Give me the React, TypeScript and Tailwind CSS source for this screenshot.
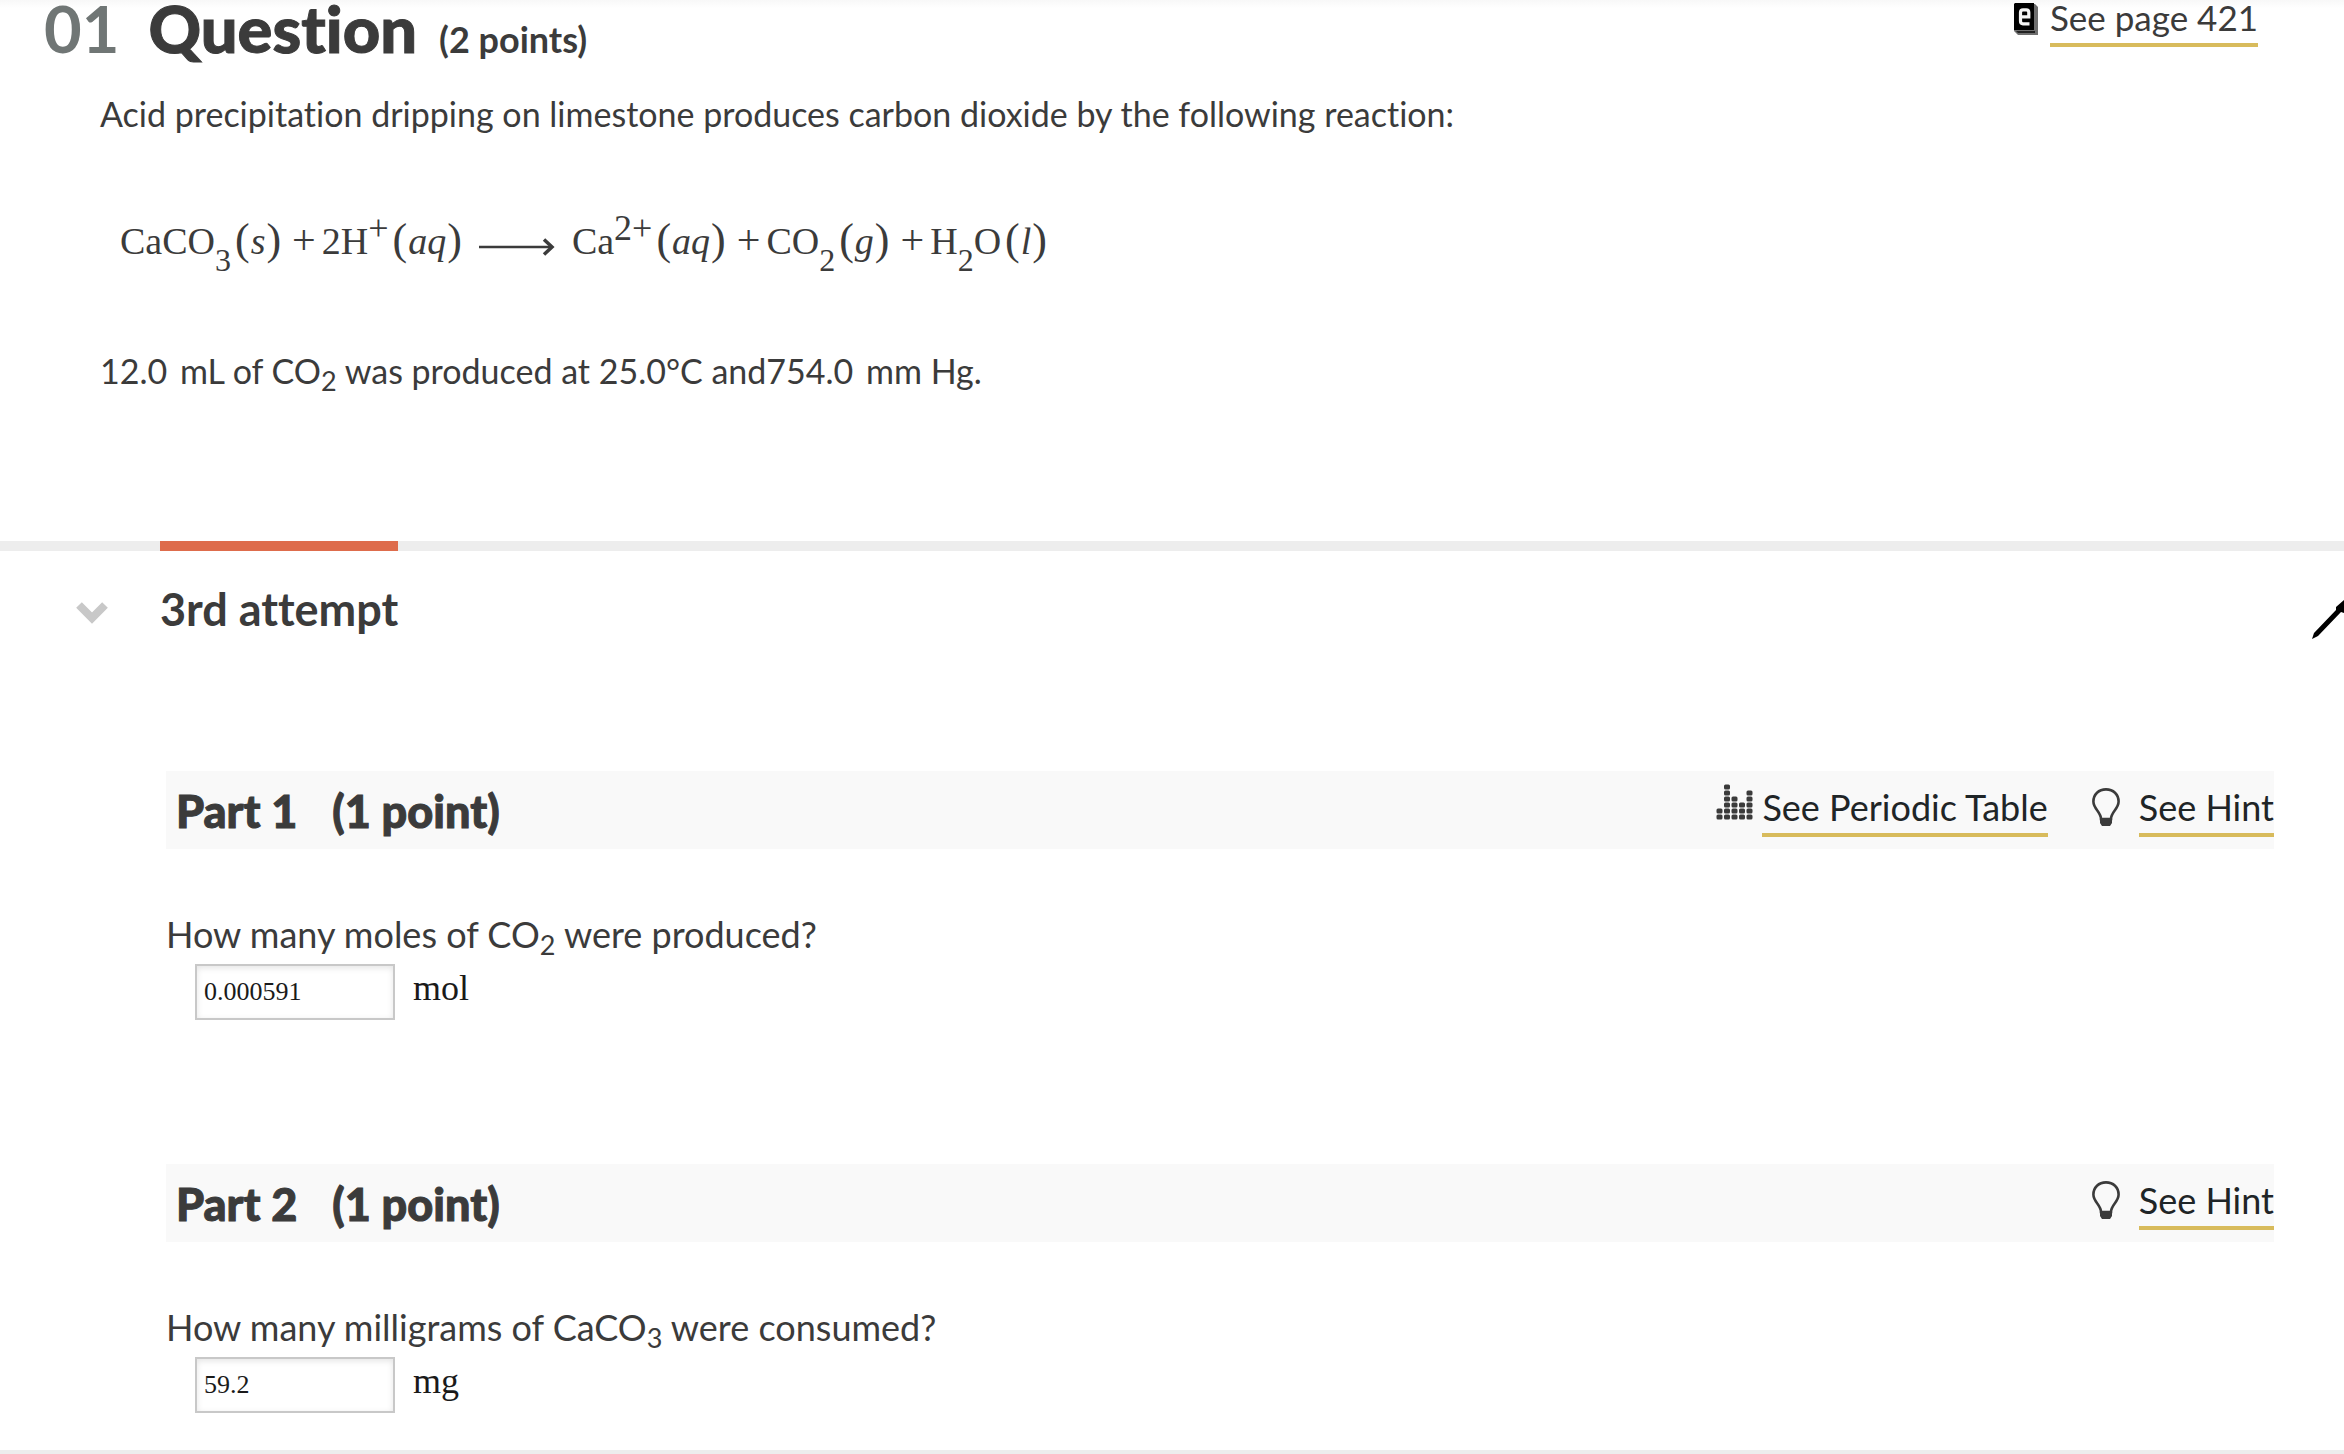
import type { ReactNode } from 'react';

const parts = [
  {
    id: 1,
    question: (
      <>
        How many moles of CO<Sub>2</Sub> were produced?
      </>
    ),
    answer: '0.000591',
    unit: 'mol',
    periodicTable: true,
  },
  {
    id: 2,
    question: (
      <>
        How many milligrams of CaCO<Sub>3</Sub> were consumed?
      </>
    ),
    answer: '59.2',
    unit: 'mg',
    periodicTable: false,
  },
];

function Sub({ children }: { children: ReactNode }) {
  return <span className="align-[-7px] text-[27px] leading-none">{children}</span>;
}

// Heights of the dotted columns in the periodic table icon
const columns = [2, 6, 4, 3, 5];

function PeriodicIcon() {
  return (
    <svg className="h-[36px] w-[38px]" viewBox="0 0 38 36" fill="#3b3b3b" aria-hidden="true">
      {columns.map((count, col) =>
        Array.from({ length: count }, (_, row) => (
          <rect key={`${col}-${row}`} x={col * 7.5 + 0.5} y={30.5 - row * 6} width="6" height="5" rx="1.5" />
        ))
      )}
    </svg>
  );
}

function BulbIcon() {
  return (
    <svg className="h-[38px] w-[28px]" viewBox="0 0 28 38" fill="none" aria-hidden="true">
      <path
        d="M9 31C9 24 1.4 21 1.4 13.6C1.4 6.2 6.8 1.4 14 1.4S26.6 6.2 26.6 13.6C26.6 21 19 24 19 31Z"
        stroke="#3b3b3b"
        strokeWidth="2.6"
      />
      <path d="M8 31h12v4l-2 3h-8l-2-3z" fill="#3b3b3b" />
    </svg>
  );
}

function BookIcon() {
  return (
    <svg className="h-[32px] w-[24px]" viewBox="0 0 24 32" aria-hidden="true">
      <path d="M3 1h18l3 3v28H4l-4-4z" fill="#6e6e6e" />
      <path d="M2 28h19v2H4z" fill="#222" />
      <path d="M1 0h19v27H0V1z" fill="#000" />
      <path
        d="M7 13.8H14.8V9.5Q14.8 6.8 12.3 6.8H9Q6.5 6.8 6.5 9.5V18Q6.5 20.8 9 20.8H15.5"
        fill="none"
        stroke="#f4f4f4"
        strokeWidth="3.2"
      />
    </svg>
  );
}

function RefLink({ children }: { children: ReactNode }) {
  return (
    <a href="#" className="border-b-4 border-[#d8bb5c] pb-[9px] leading-[34px]">
      {children}
    </a>
  );
}

function State({ children }: { children: ReactNode }) {
  return (
    <span className="ml-1">
      <span className="text-[44px] leading-none">(</span>
      <i className="mx-px">{children}</i>
      <span className="text-[44px] leading-none">)</span>
    </span>
  );
}

function Plus() {
  return <span className="mr-[6px] ml-[11px] text-[42px]">+</span>;
}

function Lower({ children }: { children: ReactNode }) {
  return <span className="align-[-17px] text-[32px] leading-none">{children}</span>;
}

function Upper({ children }: { children: ReactNode }) {
  return <span className="align-[14px] text-[36px] leading-none">{children}</span>;
}

function Equation() {
  return (
    <div className="flex items-baseline font-['Liberation_Serif',serif] text-[38px] leading-[60px]">
      <span>
        CaCO<Lower>3</Lower>
        <State>s</State>
      </span>
      <Plus />
      <span>
        2H<Upper>+</Upper>
        <State>aq</State>
      </span>
      <svg className="mx-[17px] h-[18px] w-[76px] translate-y-[2px]" viewBox="0 0 76 18" fill="none" stroke="#3b3b3b" aria-hidden="true">
        <path d="M0 9h73" strokeWidth="2.5" />
        <path d="M65 1.5L73 9L65 16.5" strokeWidth="3.5" />
      </svg>
      <span>
        Ca<Upper>2+</Upper>
        <State>aq</State>
      </span>
      <Plus />
      <span>
        CO<Lower>2</Lower>
        <State>g</State>
      </span>
      <Plus />
      <span>
        H<Lower>2</Lower>O<State>l</State>
      </span>
    </div>
  );
}

export default function App() {
  return (
    <main className="min-h-screen bg-white font-['Lato',sans-serif] text-[#3b3b3b] [font-variant-ligatures:none]">
      <header className="flex items-start justify-between bg-linear-to-b from-[#f8f8f8] to-white to-[8px] pr-[86px] pl-[44px]">
        <h1 className="flex items-baseline text-[65px] leading-[56px]">
          <span className="font-bold text-[#707675]">01</span>
          <span className="ml-[29px] font-black [-webkit-text-stroke:1px_#3b3b3b]">Question</span>
          <span className="ml-[22px] text-[36px] font-bold">(2 points)</span>
        </h1>
        <div className="flex items-start gap-[12px] text-[35px]">
          <div className="pt-[3px]">
            <BookIcon />
          </div>
          <RefLink>See page 421</RefLink>
        </div>
      </header>

      <section className="px-[100px] pt-[25px] text-[34px] leading-[44px]">
        <p>Acid precipitation dripping on limestone produces carbon dioxide by the following reaction:</p>
        <div className="mt-[74px] pl-[20px]">
          <Equation />
        </div>
        <p className="mt-[73px]">
          12.0 <span className="ml-[4px]">mL</span> of CO<Sub>2</Sub> was produced at 25.0°C and754.0{' '}
          <span className="ml-[4px]">mm</span> Hg.
        </p>
      </section>

      <section className="mt-[147px] border-t-[10px] border-[#ededed]">
        <div className="flex items-start">
          <button type="button" aria-label="Toggle attempt" className="mt-[51px] ml-[76px]">
            <svg className="h-[22px] w-[32px]" viewBox="0 0 32 22" fill="none" aria-hidden="true">
              <path d="M3 3L16 16L29 3" stroke="#c8c8c8" strokeWidth="8" />
            </svg>
          </button>
          <h2 className="-mt-[10px] ml-[52px] border-t-[10px] border-[#de6c4c] pt-[30px] text-[45px] leading-[56px] font-bold">
            3rd attempt
          </h2>
          <svg className="mt-[48px] ml-auto h-[42px] w-[34px]" viewBox="0 0 34 42" aria-hidden="true">
            <path d="M2 40L4 34L26 11V8L34 1V14L31 13L8 37Z" fill="#000" />
          </svg>
        </div>

        <div className="pt-[130px] pr-[70px] pl-[166px]">
          {parts.map((part) => (
            <article key={part.id} className="mb-[144px] last:mb-0">
              <div className="flex h-[78px] items-start justify-between bg-[#f9f9f9] pl-[10px]">
                <h3 className="flex gap-[35px] pt-[12px] text-[45px] leading-[56px] font-black [-webkit-text-stroke:1px_#3b3b3b]">
                  <span>Part {part.id}</span>
                  <span>(1 point)</span>
                </h3>
                <div className="flex items-start pt-[13px] text-[36px] text-[#1f2527]">
                  {part.periodicTable && (
                    <div className="mr-[44px] flex items-start gap-[8px]">
                      <PeriodicIcon />
                      <div className="flex pt-[6px]">
                        <RefLink>See Periodic Table</RefLink>
                      </div>
                    </div>
                  )}
                  <div className="flex items-start gap-[19px]">
                    <div className="pt-[4px]">
                      <BulbIcon />
                    </div>
                    <div className="flex pt-[6px]">
                      <RefLink>See Hint</RefLink>
                    </div>
                  </div>
                </div>
              </div>
              <label htmlFor={`answer-${part.id}`} className="mt-[63px] block text-[36px] leading-[44px]">
                {part.question}
              </label>
              <div className="mt-[6px] ml-[29px] flex items-baseline gap-[18px] font-['Liberation_Serif',serif] text-[#1a1a1a]">
                <input
                  id={`answer-${part.id}`}
                  defaultValue={part.answer}
                  className="h-[56px] w-[200px] border-2 border-[#c8c8c8] bg-white px-[7px] text-[26px] shadow-[inset_0_2px_6px_#e4e4e4] outline-none"
                />
                <span className="text-[36px] leading-[44px]">{part.unit}</span>
              </div>
            </article>
          ))}
        </div>
      </section>
      <hr className="mt-[37px] border-t-4 border-[#ededed]" />
    </main>
  );
}
